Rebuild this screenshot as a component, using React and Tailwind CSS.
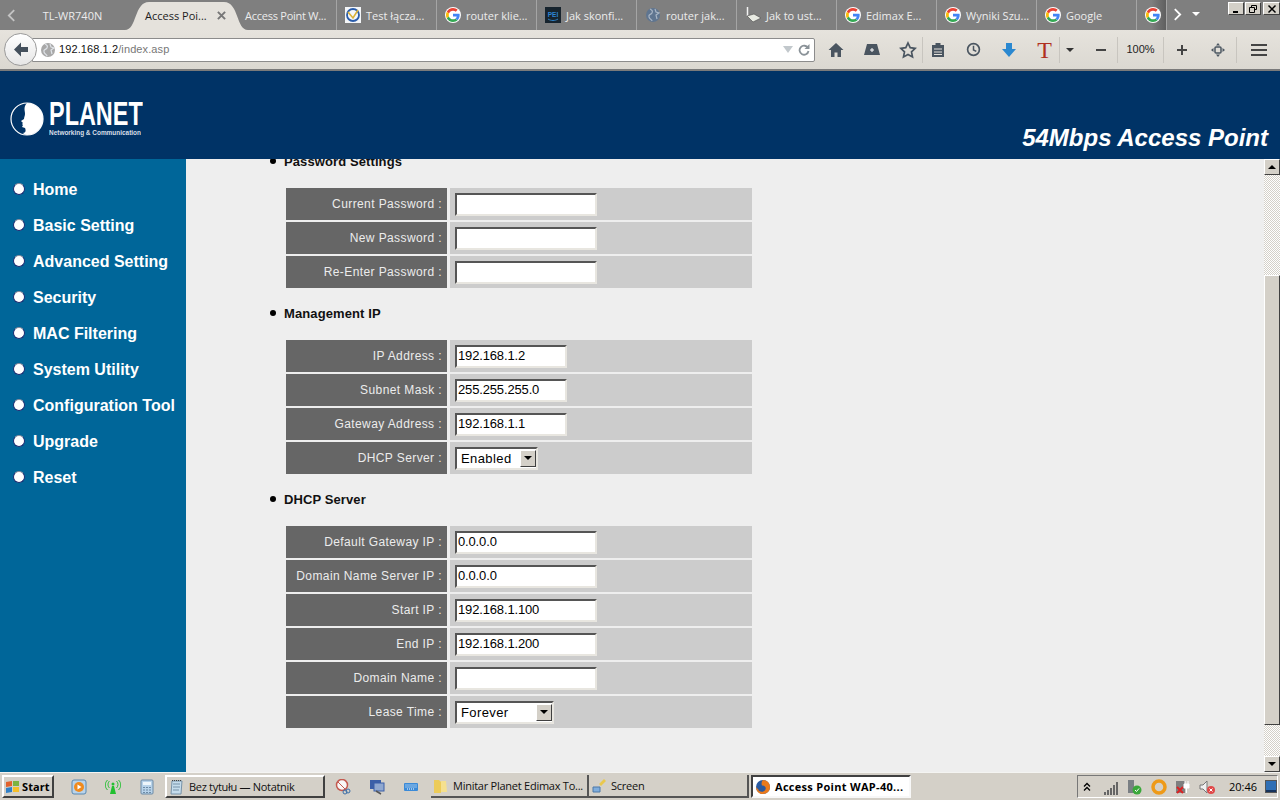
import React from "react";

const G = () => (
  <svg viewBox="0 0 48 48" className="w-4 h-4 shrink-0 rounded-full bg-white">
    <path fill="#EA4335" d="M24 11c3.2 0 6 1.1 8.300 3.200l5.700-5.700C34.500 5.200 29.700 3 24 3 15.800 3 8.700 7.700 5.300 14.600l6.700 5.200C13.600 14.700 18.400 11 24 11z"/>
    <path fill="#4285F4" d="M44 24.500c0-1.500-.1-2.900-.4-4.300H24v8h11.300c-.5 2.600-2 4.800-4.200 6.300l6.500 5C41.400 36 44 30.800 44 24.500z"/>
    <path fill="#FBBC05" d="M12 28.200c-.4-1.300-.7-2.700-.7-4.200s.3-2.900.7-4.200l-6.700-5.200C3.900 17.400 3 20.600 3 24s.9 6.600 2.300 9.400l6.700-5.200z"/>
    <path fill="#34A853" d="M24 45c5.700 0 10.500-1.900 13.600-5.100l-6.500-5c-1.800 1.200-4.100 2-7.100 2-5.600 0-10.400-3.700-12-8.700l-6.700 5.200C8.700 40.300 15.800 45 24 45z"/>
  </svg>
);

const Globe = ({ c = "#8a95a3", s = "#dfe3e8" }) => (
  <svg viewBox="0 0 16 16" className="w-4 h-4 shrink-0">
    <circle cx="8" cy="8" r="7" fill={c} />
    <path d="M5 2c2 1 3 2 2 4S3 7 4 10s3 2 3 4M10 2l1 3 3 1-3 2 1 4" fill="none" stroke={s} strokeWidth="1.200" />
  </svg>
);

const Speedtest = () => (
  <svg viewBox="0 0 16 16" className="w-4 h-4 shrink-0">
    <rect width="16" height="16" fill="#f4f6f8" />
    <circle cx="8" cy="8" r="6" fill="none" stroke="#2a5caa" strokeWidth="1.800" />
    <path d="M3 5l5 6 5-8" fill="none" stroke="#d9b23a" strokeWidth="1.600" />
  </svg>
);

const Pei = () => (
  <svg viewBox="0 0 16 16" className="w-4 h-4 shrink-0">
    <rect width="16" height="16" fill="#17242e" />
    <text x="8" y="10" textAnchor="middle" fontSize="6.500" fontWeight="700" fontFamily="Liberation Sans, sans-serif" fill="#2d86d4">PEI</text>
    <path d="M3 12c3 2 7 2 10 0" stroke="#2d7fc4" fill="none" />
  </svg>
);

const RouterTab = () => (
  <svg viewBox="0 0 16 16" className="w-4 h-4 shrink-0">
    <path d="M2.500 0v9" stroke="#f3f3f3" strokeWidth="1.500" />
    <path d="M2 9l7-2 7 4-8 4z" fill="#e8eae2" stroke="#4a4a4a" strokeWidth=".6" />
  </svg>
);

const tabs = [
  [<Speedtest />, "Test łącza..."],
  [<G />, "router klie..."],
  [<Pei />, "Jak skonfi..."],
  [<Globe c="#5f7590" s="#a9b6c6" />, "router jak..."],
  [<RouterTab />, "Jak to ust..."],
  [<G />, "Edimax E..."],
  [<G />, "Wyniki Szu..."],
  [<G />, "Google"],
];

const tabFont = "font-['Open_Sans',sans-serif] text-[11px] whitespace-nowrap";

function TabBar() {
  return (
    <div className="h-[30px] bg-[#7f7f7f] flex relative shrink-0">
      <div className="w-[23px] flex items-center justify-center">
        <svg viewBox="0 0 10 14" className="w-[9px] h-[13px]"><path d="M8 1L2 7l6 6" fill="none" stroke="#c4c4c4" strokeWidth="2" /></svg>
      </div>
      <div className={`w-[112px] flex items-center justify-center pr-[13px] pt-[2px] text-[#ececec] ${tabFont}`}>TL-WR740N</div>
      <div className={`w-[102px] relative flex items-center pt-[2px] text-[#1c1c1c] ${tabFont}`}>
        <svg viewBox="0 0 123 28" className="absolute left-[-10px] top-[2px] w-[123px] h-[28px]">
          <path d="M0 28C12 28 9 0 24 0H99C114 0 111 28 123 28Z" fill="#e5e2dc" />
        </svg>
        <span className="relative pl-[10px]">Access Poi...</span>
        <svg viewBox="0 0 10 10" className="absolute left-[82px] top-[11px] w-[9px] h-[9px]">
          <path d="M1 1l8 8M9 1l-8 8" stroke="#777" strokeWidth="2.200" />
        </svg>
      </div>
      <div className={`w-[100px] flex items-center pl-[8px] pt-[2px] tracking-[-0.25px] text-[#ececec] border-r border-[#a5a5a5] ${tabFont}`}>Access Point W...</div>
      {tabs.map(([icon, t], i) => (
        <div key={i} className={`w-[100px] flex items-center pl-[8px] gap-[5px] text-[#ececec] border-r border-[#a5a5a5] ${tabFont}`}>
          {icon}
          <span className="pt-[2px]">{t}</span>
        </div>
      ))}
      <div className="w-[30px] flex items-center pl-[8px] overflow-hidden bg-gradient-to-r from-[#7f7f7f] via-[#7f7f7f] to-[#5f5f5f] border-r border-[#a5a5a5]"><G /></div>
      <div className="w-[20px] flex items-center justify-center pb-[2px]">
        <svg viewBox="0 0 10 14" className="w-[9px] h-[13px]"><path d="M2 1l6 6-6 6" fill="none" stroke="#fff" strokeWidth="2" /></svg>
      </div>
      <div className="w-[18px] flex items-center justify-center pb-[2px]">
        <div className="w-0 h-0 border-x-[4px] border-x-transparent border-t-[4px] border-t-white" />
      </div>
      <div className="absolute right-0 top-[2px] flex gap-[1px]">
        {["min", "res", "close"].map((k) => (
          <div key={k} className={`h-[13px] bg-[#d4d0c8] border border-t-white border-l-white border-r-[#404040] border-b-[#404040] flex items-center justify-center ${k === "close" ? "ml-[1px] w-[17px]" : "w-[16px]"}`}>
            <svg viewBox="0 0 10 10" className="w-[10px] h-[10px]">
              {k === "min" && <path d="M2 8h5" stroke="#000" strokeWidth="2" />}
              {k === "res" && <path d="M3.500 3V1.500h5v4H7M1.500 3.500h5v5h-5z" stroke="#000" fill="none" />}
              {k === "close" && <path d="M1.500 1.500l7 7M8.500 1.500l-7 7" stroke="#000" strokeWidth="1.500" />}
            </svg>
          </div>
        ))}
      </div>
    </div>
  );
}

const ic = "#4a5560";
const tools = [
  [36, 0, <svg viewBox="0 0 16 16" className="w-4 h-4"><path d="M8 1L0.500 8h2.500v7h3.500v-4.500h3V15H13V8h2.500z" fill={ic} /></svg>],
  [36, 0, <svg viewBox="0 0 18 14" className="w-[18px] h-[14px]"><path d="M4 1h10l3 11H1z" fill={ic} /><path d="M7 7h4M9 5v4" stroke="#fff" /></svg>],
  [33, 3, <svg viewBox="0 0 18 18" className="w-[18px] h-[18px]"><path d="M9 2l2.200 4.700 5 .6-3.700 3.500 1 5.100L9 13.400 4.500 15.900l1-5.100L1.800 7.300l5-.6z" fill="none" stroke={ic} strokeWidth="1.700" /></svg>, true],
  [30, 0, <svg viewBox="0 0 14 16" className="w-[14px] h-4"><path d="M1 3h12v12H1z" fill={ic} /><rect x="4.500" y="1" width="5" height="3" fill={ic} /><path d="M3 7h8M3 10h8M3 12.500h8" stroke="#e4e1db" /></svg>],
  [38, 2, <svg viewBox="0 0 16 16" className="w-[15px] h-[15px]"><circle cx="8" cy="8" r="6.300" fill="none" stroke={ic} strokeWidth="1.800" /><path d="M8 4v4.500l3 1.500" fill="none" stroke={ic} strokeWidth="1.600" /></svg>],
  [36, 0, <svg viewBox="0 0 16 16" className="w-4 h-4"><path d="M5 1h6v6h4l-7 8-7-8h4z" fill="#2a88d0" /></svg>],
  [33, 3, <span className="font-['Liberation_Serif',serif] text-[24px] leading-none text-[#b03020]">T</span>, true],
  [18, 2, <div className="w-0 h-0 border-x-[4px] border-x-transparent border-t-[4px] border-t-[#333]" />],
  [40, 6, <div className="w-[10px] h-[2px] bg-[#444]" />, true],
  [46, 0, <span className="font-['Liberation_Sans',sans-serif] text-[11px] text-[#222]">100%</span>, true],
  [36, 0, <svg viewBox="0 0 10 10" className="w-[10px] h-[10px]"><path d="M5 0v10M0 5h10" stroke="#444" strokeWidth="2" /></svg>],
  [37, 0, <svg viewBox="0 0 14 14" className="w-[14px] h-[14px]"><rect x="4" y="4" width="6" height="6" rx="1" fill="none" stroke={ic} strokeWidth="1.500" /><path d="M7 0l2 2.500H5zM7 14l2-2.500H5zM0 7l2.500-2v4zM14 7l-2.500-2v4z" fill={ic} /></svg>, true],
  [43, 0, <div className="flex flex-col gap-[3px]"><div className="w-4 h-[2px] bg-[#444]" /><div className="w-4 h-[2px] bg-[#444]" /><div className="w-4 h-[2px] bg-[#444]" /></div>],
];

function Toolbar() {
  return (
    <div className="h-[41px] shrink-0 bg-gradient-to-b from-[#e6e3dd] to-[#dbd8d1] border-b-2 border-[#7a7a7a] flex items-center pl-[4px]">
      <div className="w-[33px] h-[33px] rounded-full bg-gradient-to-b from-white to-[#e6e6e6] border border-[#9a9a9a] flex items-center justify-center z-10 shrink-0">
        <svg viewBox="0 0 16 14" className="w-[16px] h-[15px]"><path d="M8 0L1 7l7 7V9.500h7v-5H8z" fill="#44505c" /></svg>
      </div>
      <div className="ml-[-5px] w-[783px] h-[24px] bg-white border border-[#8c8c8c] rounded-r-[2px] flex items-center shrink-0">
        <div className="ml-[7px]"><Globe c="#a8a8a8" /></div>
        <span className="ml-[3px] font-['Liberation_Sans',sans-serif] text-[11px] tracking-[0.1px] text-[#111]">192.168.1.2<span className="text-[#777]">/index.asp</span></span>
        <div className="ml-auto mr-[4px] flex items-center gap-[5px]">
          <div className="w-0 h-0 border-x-[5px] border-x-transparent border-t-[7px] border-t-[#c2c8cc]" />
          <svg viewBox="0 0 12 12" className="w-[12px] h-[12px]"><path d="M10 4a4.500 4.500 0 1 0 .5 3" fill="none" stroke="#8a9298" strokeWidth="1.800" /><path d="M11.500 0v5h-5z" fill="#8a9298" /></svg>
        </div>
      </div>
      <div className="ml-[3px] flex items-center">
        {tools.map(([w, pl, icon, sep], i) => (
          <div key={i} style={{ width: w, paddingLeft: pl }} className={`h-[26px] flex items-center justify-center ${sep ? "border-r border-[#c8c5bf]" : ""}`}>
            {icon}
          </div>
        ))}
      </div>
    </div>
  );
}

function Logo() {
  return (
    <div className="flex items-center gap-[5px] pt-[7px]">
      <svg viewBox="0 0 34 34" className="w-[34px] h-[34px] shrink-0">
        <circle cx="17" cy="17" r="16" fill="#003366" stroke="#fff" strokeWidth="1.200" />
        <path d="M17 1a16 16 0 0 1 0 32c-2 0-3-1-4-2 3 0 3-3 2-5l-3-1 1-2-1-1 1-1-2-2 3-2c0-2 1-3 1-5 0-3-2-7 2-11z" fill="#fff" />
      </svg>
      <div className="flex flex-col items-start w-[96px]">
        <span className="font-['Liberation_Sans',sans-serif] font-bold text-[33px] leading-[25px] text-white scale-x-[0.71] origin-left whitespace-nowrap">PLANET</span>
        <span className="font-['Liberation_Sans',sans-serif] font-bold text-[7px] leading-[9px] text-[#d8dfe8] mt-[2px] scale-x-[0.92] origin-left whitespace-nowrap">Networking &amp; Communication</span>
      </div>
    </div>
  );
}

const nav = ["Home", "Basic Setting", "Advanced Setting", "Security", "MAC Filtering", "System Utility", "Configuration Tool", "Upgrade", "Reset"];

function Sidebar() {
  return (
    <div className="w-[186px] shrink-0 bg-[#006699] pt-[13px] pl-[13px] overflow-hidden">
      {nav.map((n) => (
        <div key={n} className="h-[36px] flex items-center gap-[8px]">
          <div className="w-[12px] h-[12px] rounded-full bg-white border border-[#1a2a70] border-t-[#8a8a9a] mt-[-3px] shrink-0" />
          <span className="font-['Liberation_Sans',sans-serif] font-bold text-[16px] text-white whitespace-nowrap">{n}</span>
        </div>
      ))}
    </div>
  );
}

const af = "font-['Liberation_Sans',sans-serif]";

function Field({ value = "", w }) {
  return (
    <input
      readOnly
      value={value}
      style={{ width: w }}
      className={`h-[23px] px-[1px] pb-[1px] bg-white border-2 border-t-[#555] border-l-[#555] border-r-[#e8e6e0] border-b-[#e8e6e0] text-[13px] tracking-[-0.15px] text-black outline-none ${af}`}
    />
  );
}

function Select({ value, w }) {
  return (
    <div style={{ width: w }} className="h-[23px] bg-white border-2 border-t-[#555] border-l-[#555] border-r-[#e8e6e0] border-b-[#e8e6e0] flex items-center justify-between">
      <span className={`pl-[4px] pt-[1px] text-[13px] tracking-[0.4px] text-black ${af}`}>{value}</span>
      <div className="w-[16px] h-[17px] bg-[#d4d0c8] border border-t-white border-l-white border-r-[#404040] border-b-[#404040] flex items-center justify-center">
        <div className="w-0 h-0 border-x-[4px] border-x-transparent border-t-[4px] border-t-black" />
      </div>
    </div>
  );
}

function Row({ label, children }) {
  return (
    <div className="flex gap-[3px] h-[32px]">
      <div className={`w-[161px] bg-[#666666] flex items-center justify-end pr-[5px] text-[12px] tracking-[0.4px] text-[#ececec] whitespace-nowrap ${af}`}>{label}</div>
      <div className="w-[302px] bg-[#cccccc] flex items-center pl-[5px]">{children}</div>
    </div>
  );
}

function Section({ title, rows, className = "" }) {
  return (
    <div className={className}>
      <div className="flex items-center h-[20px] pl-[270px]">
        <div className="w-[6px] h-[6px] rounded-full bg-black mr-[8px]" />
        <span className={`font-bold text-[13px] tracking-[0.1px] pt-[2px] text-[#111] ${af}`}>{title}</span>
      </div>
      <div className="pl-[286px] flex flex-col gap-[2px] mt-[17px]">
        {rows.map((r) => (
          <Row key={r.label} label={r.label}>
            {r.select ? <Select value={r.select} w={r.w} /> : <Field value={r.value} w={r.w} />}
          </Row>
        ))}
      </div>
    </div>
  );
}

function Scrollbar() {
  const Btn = ({ up }) => (
    <div className="h-[16px] bg-[#d4d0c8] border border-t-white border-l-white border-r-[#404040] border-b-[#404040] flex items-center justify-center shrink-0">
      <div className={`w-0 h-0 border-x-[4px] border-x-transparent ${up ? "border-b-[4px] border-b-black" : "border-t-[4px] border-t-black"}`} />
    </div>
  );
  return (
    <div className="absolute right-0 top-0 bottom-0 w-[16px] flex flex-col bg-[repeating-conic-gradient(#d4d0c8_0_25%,#ffffff_0_50%)] bg-[length:2px_2px]">
      <Btn up />
      <div className="h-[100px] shrink-0" />
      <div className="h-[450px] shrink-0 bg-[#d4d0c8] border border-t-white border-l-white border-r-[#404040] border-b-[#404040]" />
      <div className="flex-1" />
      <Btn />
    </div>
  );
}

const S = ({ children }) => <svg viewBox="0 0 16 16" className="w-4 h-4 shrink-0">{children}</svg>;

const Flag = () => (
  <svg viewBox="0 0 16 16" className="w-4 h-4 shrink-0">
    <path d="M1 3l6-1v5l-6 1z" fill="#e2622d" /><path d="M8 2l6 0v5l-6 0z" fill="#7cb342" />
    <path d="M1 9l6-1v5l-6 1z" fill="#2f80c8" /><path d="M8 8h6v5H8z" fill="#f5bf2a" />
  </svg>
);

const Player = () => <S><rect x="1" y="1" width="14" height="14" rx="2" fill="#b9d3ea" stroke="#5a88b0" /><circle cx="8" cy="8" r="5" fill="#f08a1d" /><path d="M6.500 5.500l4 2.500-4 2.500z" fill="#fff" /></S>;
const Wifi = () => <S><path d="M7 7h2l2 8H5z" fill="#22c030" /><circle cx="8" cy="5" r="1.500" fill="#22c030" /><path d="M4.500 2c-2 2-2 5 0 7M11.500 2c2 2 2 5 0 7M2.500 1c-3 3-3 7 0 10M13.500 1c3 3 3 7 0 10" fill="none" stroke="#22c030" /></S>;
const Calc = () => <S><rect x="2" y="1" width="12" height="14" rx="1" fill="#b8d3ea" stroke="#6c8aa5" /><rect x="4" y="3" width="8" height="3" fill="#eef6fb" /><path d="M4 8.500h8M4 11h8M4 13.500h8" stroke="#6c8aa5" strokeDasharray="2 1" /></S>;
const Note = () => <S><path d="M3 2h10l-1 13H2z" fill="#c5dcec" stroke="#7792a8" /><path d="M4 5h7M4 8h7M4 11h6" stroke="#7792a8" /><path d="M3 1.500h10" stroke="#444" strokeDasharray="1 1" /></S>;
const Scissors = () => <S><circle cx="7" cy="6" r="5.500" fill="#f8f8f8" stroke="#c45a50" strokeWidth="1.500" /><path d="M3 3l7 7" stroke="#c45a50" /><circle cx="10" cy="13" r="2" fill="none" stroke="#3b6ea8" /><circle cx="13" cy="12" r="2" fill="none" stroke="#3b6ea8" /></S>;
const Screens = () => <S><rect x="1" y="1" width="11" height="9" fill="#3b5fa8" /><rect x="5" y="4" width="10" height="8" fill="#90a8d0" stroke="#3b5fa8" /><path d="M7 12l5 3" stroke="#555" strokeWidth="1.500" /></S>;
const Kbd = () => <S><rect x="1" y="4" width="14" height="8" rx="1" fill="#3a8ad8" /><path d="M2.500 6h11M2.500 8h11M4 10h8" stroke="#fff" strokeDasharray="1 1" /></S>;
const Folder = () => <S><path d="M1 2h5l2 2v11H1z" fill="#eccb58" /><path d="M8 3h5l1 11H8z" fill="#f5e08e" /></S>;
const ScreenIc = () => <S><path d="M2 9h7v5H2z" fill="#7faddd" stroke="#4d79a8" /><path d="M8 6l5-5 2 2-5 5z" fill="#e9c84c" /></S>;
const Firefox = () => <S><circle cx="8" cy="8" r="7" fill="#2a5aa0" /><path d="M8 1c4 0 7 3 7 7s-3 7-7 7-7-3-6.800-7c1 1 1 2 2 2 0 3 5 4 7 1 1.500-2-.2-5-3.200-4.500C6 4 7 2 8 1z" fill="#ea7a1c" /></S>;

const tf = "font-['Open_Sans',sans-serif]";

function TaskBtn({ w, icon, text, raised, active, ml = 0 }) {
  const box = active
    ? "bg-white border-2 border-t-[#404040] border-l-[#404040] border-r-[#f8f8f8] border-b-[#f8f8f8] font-bold text-black tracking-[0.3px]"
    : raised
    ? "bg-[#d4d0c8] border-2 border-t-white border-l-white border-r-[#404040] border-b-[#404040] text-[#111] tracking-[-0.3px]"
    : "bg-[#d4d0c8] border-r-2 border-b-2 border-r-[#555] border-b-[#555] text-[#111] tracking-[-0.25px]";
  return (
    <div style={{ width: w, marginLeft: ml }} className={`h-[23px] flex items-center gap-[4px] pl-[2px] shrink-0 overflow-hidden text-[11px] whitespace-nowrap ${tf} ${box}`}>
      {icon}
      <span className="pt-[2px]">{text}</span>
    </div>
  );
}

function Taskbar() {
  const Quick = ({ children, ml }) => <div style={{ marginLeft: ml }} className="w-[18px] flex justify-center shrink-0">{children}</div>;
  return (
    <div className="h-[28px] shrink-0 bg-[#d4d0c8] border-t border-t-[#f4f4f2] flex items-center pl-[2px]">
      <div className={`w-[52px] h-[23px] bg-[#d4d0c8] border-2 border-t-white border-l-white border-r-[#404040] border-b-[#404040] flex items-center gap-[1px] pl-[1px] font-bold text-[11px] tracking-[0.1px] text-black overflow-hidden shrink-0 ${tf}`}>
        <Flag /><span className="pt-[2px]">Start</span>
      </div>
      <Quick ml={16}><Player /></Quick>
      <Quick ml={16}><Wifi /></Quick>
      <Quick ml={16}><Calc /></Quick>
      <TaskBtn ml={9} w={160} raised icon={<Note />} text="Bez tytułu — Notatnik" />
      <Quick ml={9}><Scissors /></Quick>
      <Quick ml={16}><Screens /></Quick>
      <Quick ml={16}><Kbd /></Quick>
      <TaskBtn ml={11} w={158} icon={<Folder />} text="Minitar Planet Edimax To..." />
      <TaskBtn w={160} icon={<ScreenIc />} text="Screen" />
      <TaskBtn ml={2} w={160} active icon={<Firefox />} text="Access Point WAP-40..." />
      <div className="ml-auto mr-[2px] w-[201px] h-[23px] border border-t-[#777] border-l-[#777] border-r-white border-b-white flex items-center pl-[5px] shrink-0">
        <svg viewBox="0 0 8 10" className="w-[8px] h-[10px] mr-[4px] shrink-0"><path d="M1 4.500l3-3 3 3M1 8.500l3-3 3 3" fill="none" stroke="#000" strokeWidth="1.300" /></svg>
        <div className="ml-[9px] w-[16px] h-[16px] flex items-end gap-[1px]">
          {[3, 5, 7, 10, 13].map((h) => <div key={h} style={{ height: h }} className="w-[2px] border border-[#666] bg-white" />)}
        </div>
        <div className="ml-[8px]"><S><rect x="2" y="1" width="6" height="13" fill="#7a7f84" /><circle cx="11" cy="11" r="4.500" fill="#3aa83a" /><path d="M9 11l1.500 1.500L13 9.500" stroke="#fff" fill="none" /></S></div>
        <div className="ml-[9px]"><S><circle cx="8" cy="8" r="6" fill="none" stroke="#ee9a18" strokeWidth="3.500" /></S></div>
        <div className="ml-[8px]"><S><rect x="1" y="2" width="9" height="12" fill="#7f7f7f" /><path d="M2 8l6 6M8 8l-6 6" stroke="#d22" strokeWidth="2" /><path d="M9 5h5v4h-5zM10 2v3M13 2v3M11.500 9v5" stroke="#fff" fill="#fff" /></S></div>
        <div className="ml-[8px]"><S><path d="M1 6h3l4-4v12l-4-4H1z" fill="#f0f0f0" stroke="#777" /><circle cx="12" cy="11" r="4" fill="#e04848" /><path d="M10.500 9.500l3 3M13.500 9.500l-3 3" stroke="#fff" /></S></div>
        <span className={`ml-[14px] pt-[2px] text-[11px] text-black whitespace-nowrap ${tf}`}>20:46</span>
        <div className="ml-[8px] w-[15px] h-[13px] bg-[#2f6fb5] border border-[#555] flex items-end"><div className="w-full h-[2px] bg-[#16335c]" /></div>
      </div>
    </div>
  );
}

const sec1 = [
  { label: "Current Password :", w: 142 },
  { label: "New Password :", w: 142 },
  { label: "Re-Enter Password :", w: 142 },
];
const sec2 = [
  { label: "IP Address :", value: "192.168.1.2", w: 112 },
  { label: "Subnet Mask :", value: "255.255.255.0", w: 112 },
  { label: "Gateway Address :", value: "192.168.1.1", w: 112 },
  { label: "DHCP Server :", select: "Enabled", w: 83 },
];
const sec3 = [
  { label: "Default Gateway IP :", value: "0.0.0.0", w: 142 },
  { label: "Domain Name Server IP :", value: "0.0.0.0", w: 142 },
  { label: "Start IP :", value: "192.168.1.100", w: 142 },
  { label: "End IP :", value: "192.168.1.200", w: 142 },
  { label: "Domain Name :", value: "", w: 142 },
  { label: "Lease Time :", select: "Forever", w: 99 },
];

export default function App() {
  return (
    <div className="w-[1280px] h-[800px] flex flex-col overflow-hidden">
      <TabBar />
      <Toolbar />
      <div className="h-[88px] shrink-0 bg-[#003366] flex items-center justify-between pl-[10px] pr-[12px]">
        <Logo />
        <span className={`self-end mb-[3px] font-bold italic text-[24px] text-white whitespace-nowrap ${af}`}>54Mbps Access Point</span>
      </div>
      <div className="flex-1 flex min-h-0">
        <Sidebar />
        <div className="flex-1 bg-[#eeeeee] relative overflow-hidden">
          <div className="absolute left-[-186px] right-0 top-0">
            <div className="mt-[-8px]">
              <Section title="Password Settings" rows={sec1} />
              <Section title="Management IP" rows={sec2} className="mt-[15px]" />
              <Section title="DHCP Server" rows={sec3} className="mt-[15px]" />
            </div>
          </div>
          <Scrollbar />
        </div>
      </div>
      <Taskbar />
    </div>
  );
}
